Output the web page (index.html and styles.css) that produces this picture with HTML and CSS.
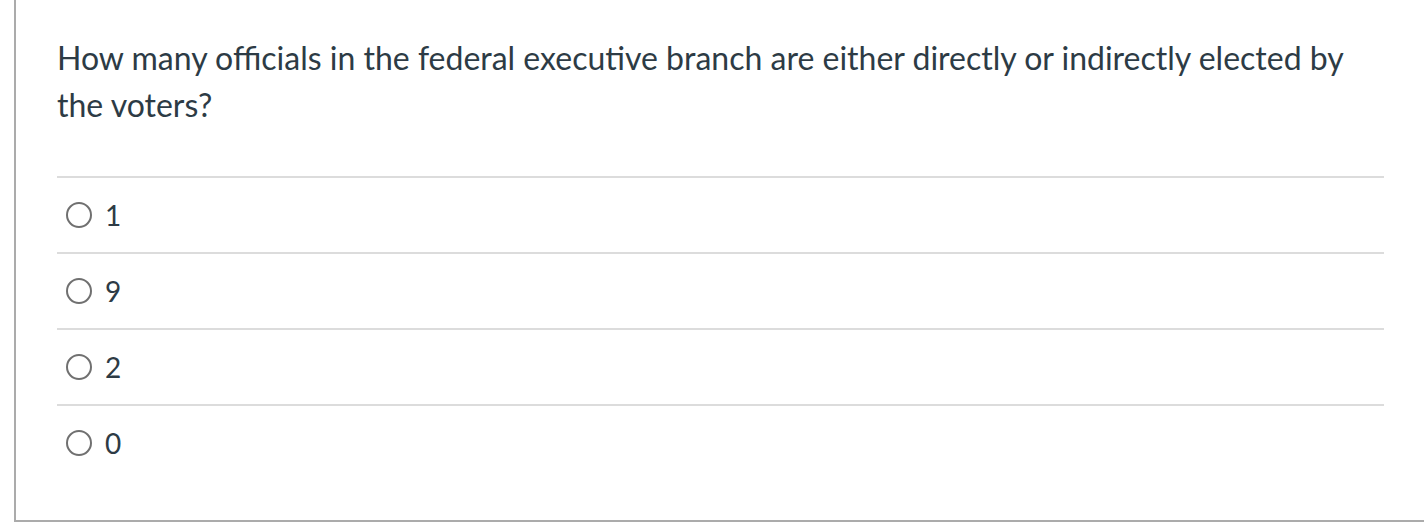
FILE: index.html
```html
<!DOCTYPE html>
<html>
<head>
<meta charset="utf-8">
<link rel="stylesheet" href="styles.css">
</head>
<body>
<div class="quiz">
  <div class="question">How many officials in the federal executive branch are either directly or indirectly elected by the voters?</div>
  <div class="answers">
    <label class="answer"><span class="radio"></span><span class="label">1</span></label>
    <label class="answer"><span class="radio"></span><span class="label">9</span></label>
    <label class="answer"><span class="radio"></span><span class="label">2</span></label>
    <label class="answer"><span class="radio"></span><span class="label">0</span></label>
  </div>
</div>
</body>
</html>
```
FILE: styles.css
```css
html, body { margin: 0; padding: 0; background: #fff; }
body { font-family: Lato, "Noto Sans", sans-serif; color: #2d3b45; }
.quiz {
  margin-left: 14px;
  border-left: 2px solid #ababab;
  border-bottom: 2px solid #ababab;
  padding: 34px 40px 0 41px;
  box-sizing: content-box;
  height: 486px;
}
.question {
  font-size: 32px;
  line-height: 47px;
}
.answers { margin-top: 48px; }
.answer {
  display: flex;
  align-items: center;
  height: 74px;
  border-top: 2px solid #dcdcdc;
  padding-left: 9px;
  gap: 13px;
}
.radio {
  width: 22px; height: 22px;
  border: 2px solid #707070;
  border-radius: 50%;
  flex: none;
}
.label { font-size: 28px; line-height: 30px; }
```
